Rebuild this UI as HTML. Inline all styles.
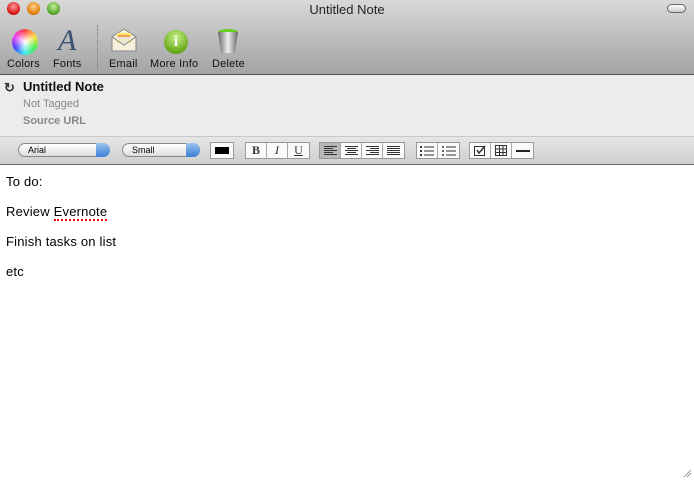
<!DOCTYPE html>
<html><head><meta charset="utf-8"><style>
*{margin:0;padding:0;box-sizing:border-box}
body{width:694px;height:480px;overflow:hidden;font-family:"Liberation Sans",sans-serif;background:#fff;position:relative}
.top{position:absolute;left:0;top:0;width:694px;height:75px;background:linear-gradient(#d9d9d9,#a3a3a3);border-bottom:1px solid #555}
.title{position:absolute;top:2px;width:100%;text-align:center;font-size:13px;color:#222}
.lt{position:absolute;top:2px;width:13px;height:13px;border-radius:50%}
.lbl{position:absolute;top:58px;font-size:11px;color:#111;letter-spacing:0.2px}
.hdr{position:absolute;top:75px;left:0;width:694px;height:62px;background:#ececec;border-bottom:1px solid #c8c8c8}
.fmt{position:absolute;top:137px;left:0;width:694px;height:28px;background:linear-gradient(#e6e6e6,#cfcfcf);border-bottom:1px solid #666}
.pop{position:absolute;top:143px;height:14px;border:1px solid #888;border-radius:7px;background:linear-gradient(#fff,#ddd);font-size:9px;padding-left:9px;line-height:12px}
.pop i{position:absolute;right:-1px;top:-1px;width:14px;height:14px;border-radius:0 7px 7px 0;background:linear-gradient(#9cc4f0,#3b7fd6);}
.btn{position:absolute;top:142px;height:17px;border:1px solid #999;background:#fafafa;display:flex}
.btn span{width:21px;height:15px;border-right:1px solid #aaa;font-family:"Liberation Serif",serif;font-size:12px;text-align:center;line-height:15px;position:relative;display:flex;align-items:center;justify-content:center;color:#333}
.btn span:last-child{border-right:none}
.txt{position:absolute;left:6px;font-size:13px;color:#000;letter-spacing:0.2px}
</style></head><body>
<div class="top">
<div class="title">Untitled Note</div>
<div class="lt" style="left:7px;background:radial-gradient(circle at 50% 35%,#ff9a9a,#d51010 70%,#8a0000)"></div>
<div class="lt" style="left:27px;background:radial-gradient(circle at 50% 35%,#ffd090,#e07a00 70%,#9a4c00)"></div>
<div class="lt" style="left:47px;background:radial-gradient(circle at 50% 35%,#c8f0a0,#4ca020 70%,#2a6a08)"></div>
<div style="position:absolute;right:8px;top:4px;width:19px;height:9px;border:1px solid #666;border-radius:5px;background:linear-gradient(#fff,#ccc)"></div>
<div style="position:absolute;left:12px;top:29px;width:26px;height:26px;border-radius:50%;background:radial-gradient(circle,#fff 0%,rgba(255,255,255,0) 60%),conic-gradient(#f44,#fd4,#4e4,#4ee,#44f,#e4e,#f44)"></div>
<div style="position:absolute;left:58px;top:24px;font-family:'Liberation Serif',serif;font-style:italic;font-size:30px;color:#3a4e72">A</div>
<div style="position:absolute;left:97px;top:25px;width:1px;height:44px;border-left:1px dotted #777"></div>
<svg style="position:absolute;left:110px;top:27px" width="28" height="26"><path d="M2 10 L14 2 L26 10 V24 H2Z" fill="#f4f0dc" stroke="#888"/><rect x="7" y="6" width="14" height="10" fill="#ffe86a"/><path d="M8 9h12M8 12h12" stroke="#e55" stroke-width="1"/><path d="M2 10 L14 18 L26 10" fill="#ede8d0" stroke="#888"/></svg>
<div style="position:absolute;left:164px;top:30px;width:24px;height:24px;border-radius:50%;background:radial-gradient(circle at 50% 30%,#c8ef8a,#6aac1c 70%,#3f7a0a);color:#fff;font:bold 15px 'Liberation Serif',serif;text-align:center;line-height:24px">i</div>
<svg style="position:absolute;left:216px;top:27px" width="24" height="28"><defs><linearGradient id="g"><stop offset="0" stop-color="#666"/><stop offset=".5" stop-color="#eee"/><stop offset="1" stop-color="#666"/></linearGradient></defs><ellipse cx="12" cy="5" rx="10" ry="3" fill="#6c2"/><path d="M2 5 L5 26 H19 L22 5Z" fill="url(#g)"/></svg>
<div class="lbl" style="left:7px">Colors</div>
<div class="lbl" style="left:53px">Fonts</div>
<div class="lbl" style="left:109px">Email</div>
<div class="lbl" style="left:150px">More Info</div>
<div class="lbl" style="left:212px">Delete</div>
</div>
<div class="hdr">
<div style="position:absolute;left:4px;top:5px;font-size:13px;font-weight:bold;color:#333">&#x21bb;</div>
<div style="position:absolute;left:23px;top:4px;font-size:13px;font-weight:bold;color:#111">Untitled Note</div>
<div style="position:absolute;left:23px;top:23px;font-size:11px;color:#888">Not Tagged</div>
<div style="position:absolute;left:23px;top:40px;font-size:11px;font-weight:bold;color:#888">Source URL</div>
</div>
<div class="fmt"></div>
<div class="pop" style="left:18px;width:92px">Arial<i></i></div>
<div class="pop" style="left:122px;width:78px">Small<i></i></div>
<div class="btn" style="left:210px;width:24px;padding:4px 4px"><div style="width:14px;height:7px;background:#000"></div></div>
<div class="btn" style="left:245px"><span><b>B</b></span><span><i>I</i></span><span><u>U</u></span></div>
<div class="btn" style="left:319px">
<span style="background:#b8b8b8"><svg width="13" height="9"><path d="M0 .5h13M0 2.5h9M0 4.5h13M0 6.5h9M0 8.5h13" stroke="#333"/></svg></span>
<span><svg width="13" height="9"><path d="M0 .5h13M2 2.5h9M0 4.5h13M2 6.5h9M0 8.5h13" stroke="#333"/></svg></span>
<span><svg width="13" height="9"><path d="M0 .5h13M4 2.5h9M0 4.5h13M4 6.5h9M0 8.5h13" stroke="#333"/></svg></span>
<span><svg width="13" height="9"><path d="M0 .5h13M0 2.5h13M0 4.5h13M0 6.5h13M0 8.5h13" stroke="#333"/></svg></span>
</div>
<div class="btn" style="left:416px">
<span><svg width="14" height="10"><path d="M0 1h2M0 5h2M0 9h2" stroke="#333" stroke-width="2"/><path d="M4 1h10M4 5h10M4 9h10" stroke="#333"/></svg></span>
<span><svg width="14" height="10"><path d="M0 1h2M0 5h2M0 9h2" stroke="#333" stroke-width="1.5"/><path d="M4 1h10M4 5h10M4 9h10" stroke="#333"/></svg></span>
</div>
<div class="btn" style="left:469px">
<span><svg width="13" height="11"><rect x=".5" y="1.5" width="10" height="9" fill="none" stroke="#333"/><path d="M3 5l2 3 6-7" fill="none" stroke="#333" stroke-width="1.5"/></svg></span>
<span><svg width="12" height="11"><path d="M.5 .5h11v10h-11zM4.5 .5v10M8 .5v10M.5 4h11M.5 7.5h11" fill="none" stroke="#333"/></svg></span>
<span><svg width="14" height="4"><path d="M0 2h14" stroke="#222" stroke-width="2"/></svg></span>
</div>
<div class="txt" style="top:174px">To do:</div>
<div class="txt" style="top:204px">Review <span style="border-bottom:2px dotted #e00">Evernote</span></div>
<div class="txt" style="top:234px">Finish tasks on list</div>
<div class="txt" style="top:264px">etc</div>
<svg style="position:absolute;right:2px;bottom:2px" width="9" height="9"><path d="M1 8L8 1M4 8L8 4" stroke="#999"/></svg>
</body></html>
